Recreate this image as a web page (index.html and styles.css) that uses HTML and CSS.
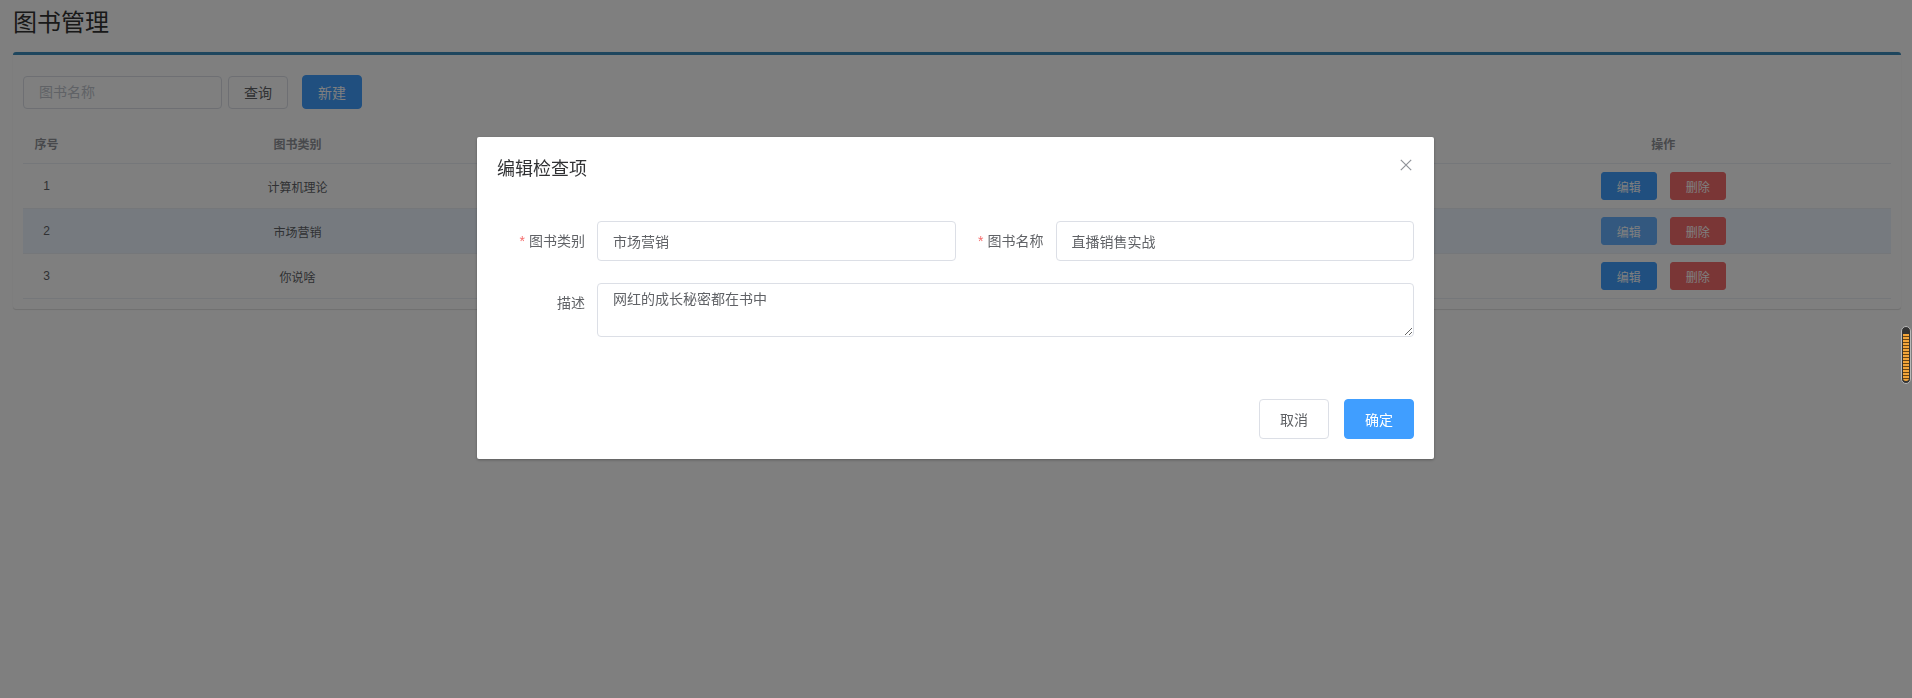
FILE: index.html
```html
<!DOCTYPE html>
<html lang="zh-CN">
<head>
<meta charset="utf-8">
<title>图书管理</title>
<link rel="stylesheet" href="styles.css">
</head>
<body>
<div class="page">
  <h1 class="page-title">图书管理</h1>
  <div class="box">
    <div class="toolbar">
      <input class="search" type="text" placeholder="图书名称">
      <button class="btn btn-default">查询</button>
      <button class="btn btn-primary">新建</button>
    </div>
    <table class="grid">
      <colgroup><col class="c-idx"><col><col><col><col></colgroup>
      <thead>
        <tr><th>序号</th><th>图书类别</th><th>图书名称</th><th>描述</th><th>操作</th></tr>
      </thead>
      <tbody>
        <tr>
          <td>1</td><td>计算机理论</td><td>深入理解计算机系统</td><td>计算机经典</td>
          <td><div class="ops"><button class="mini mini-primary">编辑</button><button class="mini mini-danger">删除</button></div></td>
        </tr>
        <tr class="current">
          <td>2</td><td>市场营销</td><td>直播销售实战</td><td>网红的成长秘密都在书中</td>
          <td><div class="ops"><button class="mini mini-primary is-focus">编辑</button><button class="mini mini-danger">删除</button></div></td>
        </tr>
        <tr>
          <td>3</td><td>你说啥</td><td>说啥</td><td>啥</td>
          <td><div class="ops"><button class="mini mini-primary">编辑</button><button class="mini mini-danger">删除</button></div></td>
        </tr>
      </tbody>
    </table>
  </div>
</div>

<div class="mask"></div>

<div class="dialog">
  <div class="dialog-header">
    <span class="dialog-title">编辑检查项</span>
    <button class="dialog-close" aria-label="Close">
      <svg width="16" height="16" viewBox="0 0 16 16"><path d="M2.8 2.8 L13.2 13.2 M13.2 2.8 L2.8 13.2" stroke="#909399" stroke-width="1.2" fill="none"/></svg>
    </button>
  </div>
  <div class="dialog-body">
    <div class="form-row">
      <div class="form-item half">
        <label class="form-label"><span class="req">*</span>图书类别</label>
        <div class="form-content"><input class="field" type="text" value="市场营销"></div>
      </div>
      <div class="form-item half">
        <label class="form-label"><span class="req">*</span>图书名称</label>
        <div class="form-content"><input class="field" type="text" value="直播销售实战"></div>
      </div>
    </div>
    <div class="form-item">
      <label class="form-label">描述</label>
      <div class="form-content"><textarea class="area" rows="2">网红的成长秘密都在书中</textarea></div>
    </div>
  </div>
  <div class="dialog-footer">
    <button class="fbtn fbtn-default">取消</button>
    <button class="fbtn fbtn-primary">确定</button>
  </div>
</div>

<div class="scroll-widget"><div class="scroll-stripes"></div></div>
</body>
</html>
```

FILE: styles.css
```css
* { box-sizing: border-box; }
html, body { margin: 0; padding: 0; background: #fff; }
body {
  font-family: "Liberation Sans", "Noto Sans CJK SC", sans-serif;
  color: #606266;
  width: 1912px;
  height: 698px;
  overflow: hidden;
  position: relative;
}
button, input, textarea { font-family: inherit; }

.page { padding: 0 11px 0 13px; }
.page-title {
  margin: 0 0 16px 0;
  padding-top: 10px;
  font-size: 24px;
  line-height: 26px;
  font-weight: 400;
  color: #333;
}

.box {
  background: #fff;
  border-top: 3px solid #3c8dbc;
  border-radius: 3px;
  box-shadow: 0 1px 1px rgba(0,0,0,0.12), 0 0 1px rgba(0,0,0,0.08);
  padding: 10px;
}

.toolbar {
  margin-top: 10px;
  height: 34px;
  display: flex;
  align-items: center;
}
.search {
  width: 199px;
  height: 33px;
  border: 1px solid #dcdfe6;
  border-radius: 4px;
  padding: 0 15px;
  font-size: 14px;
  color: #606266;
  margin-right: 6px;
  outline: none;
}
.search::placeholder { color: #c0c4cc; }
.btn {
  width: 60px;
  font-size: 14px;
  border-radius: 4px;
  padding: 0;
  cursor: pointer;
}
.btn-default {
  height: 33px;
  background: #fff;
  border: 1px solid #dcdfe6;
  color: #606266;
  margin-right: 14px;
}
.btn-primary {
  height: 34px;
  background: #409eff;
  border: 1px solid #409eff;
  color: #fff;
}

.grid {
  margin-top: 15px;
  width: 100%;
  table-layout: fixed;
  border-collapse: separate;
  border-spacing: 0;
  font-size: 12px;
}
.c-idx { width: 47px; }
.grid th, .grid td {
  padding: 0;
  text-align: center;
  border-bottom: 1px solid #ebeef5;
  white-space: nowrap;
  overflow: hidden;
}
.grid th {
  height: 40px;
  color: #909399;
  font-weight: 700;
}
.grid td {
  height: 45px;
  color: #606266;
}
.grid tr.current td { background: #ecf5ff; }

.ops {
  display: flex;
  justify-content: center;
  gap: 13px;
}
.mini {
  width: 56px;
  height: 28px;
  padding: 0;
  font-size: 12px;
  border-radius: 3px;
  color: #fff;
  cursor: pointer;
}
.mini-primary { background: #409eff; border: 1px solid #409eff; }
.mini-primary.is-focus { background: #66b1ff; border-color: #66b1ff; }
.mini-danger { background: #f56c6c; border: 1px solid #f56c6c; }

.mask {
  position: fixed;
  left: 0; top: 0; right: 0; bottom: 0;
  background: rgba(0,0,0,0.5);
}

.dialog {
  position: fixed;
  top: 137px;
  left: 477px;
  width: 957px;
  background: #fff;
  border-radius: 2px;
  box-shadow: 0 1px 3px rgba(0,0,0,0.3);
}
.dialog-header {
  position: relative;
  padding: 20px 20px 10px;
}
.dialog-title {
  display: block;
  font-size: 18px;
  line-height: 24px;
  color: #303133;
}
.dialog-close {
  position: absolute;
  top: 20px;
  right: 20px;
  width: 16px;
  height: 16px;
  padding: 0;
  border: 0;
  background: transparent;
  display: flex;
}
.dialog-body {
  padding: 30px 20px;
}
.form-row { display: flex; }
.form-item {
  display: flex;
  margin-bottom: 22px;
}
.form-item.half { flex: 1 1 0; }
.form-label {
  width: 100px;
  flex: none;
  padding-right: 12px;
  text-align: right;
  font-size: 14px;
  line-height: 40px;
  color: #606266;
}
.req { color: #f56c6c; margin-right: 4px; }
.form-content { flex: 1; display: flex; }
.field {
  width: 100%;
  height: 40px;
  border: 1px solid #dcdfe6;
  border-radius: 4px;
  padding: 0 15px;
  font-size: 14px;
  color: #606266;
  outline: none;
}
.area {
  width: 100%;
  height: 54px;
  border: 1px solid #dcdfe6;
  border-radius: 4px;
  padding: 5px 15px;
  font-size: 14px;
  line-height: 1.5;
  color: #606266;
  resize: vertical;
  outline: none;
  display: block;
}
.dialog-footer {
  padding: 10px 20px 20px;
  display: flex;
  justify-content: flex-end;
  gap: 15px;
}
.fbtn {
  width: 70px;
  height: 40px;
  padding: 0;
  font-size: 14px;
  border-radius: 4px;
  cursor: pointer;
}
.fbtn-default { background: #fff; border: 1px solid #dcdfe6; color: #606266; }
.fbtn-primary { background: #409eff; border: 1px solid #409eff; color: #fff; }

.scroll-widget {
  position: absolute;
  top: 326px;
  left: 1901px;
  width: 10px;
  height: 58px;
  border: 1px solid #b8b8b8;
  border-radius: 5px;
  background: #333;
  padding: 7px 1px 2px;
}
.scroll-stripes {
  height: 100%;
  border-radius: 0 0 3px 3px;
  background: repeating-linear-gradient(to bottom, #f2a53a 0 2px, #6a4512 2px 3px);
}
```
